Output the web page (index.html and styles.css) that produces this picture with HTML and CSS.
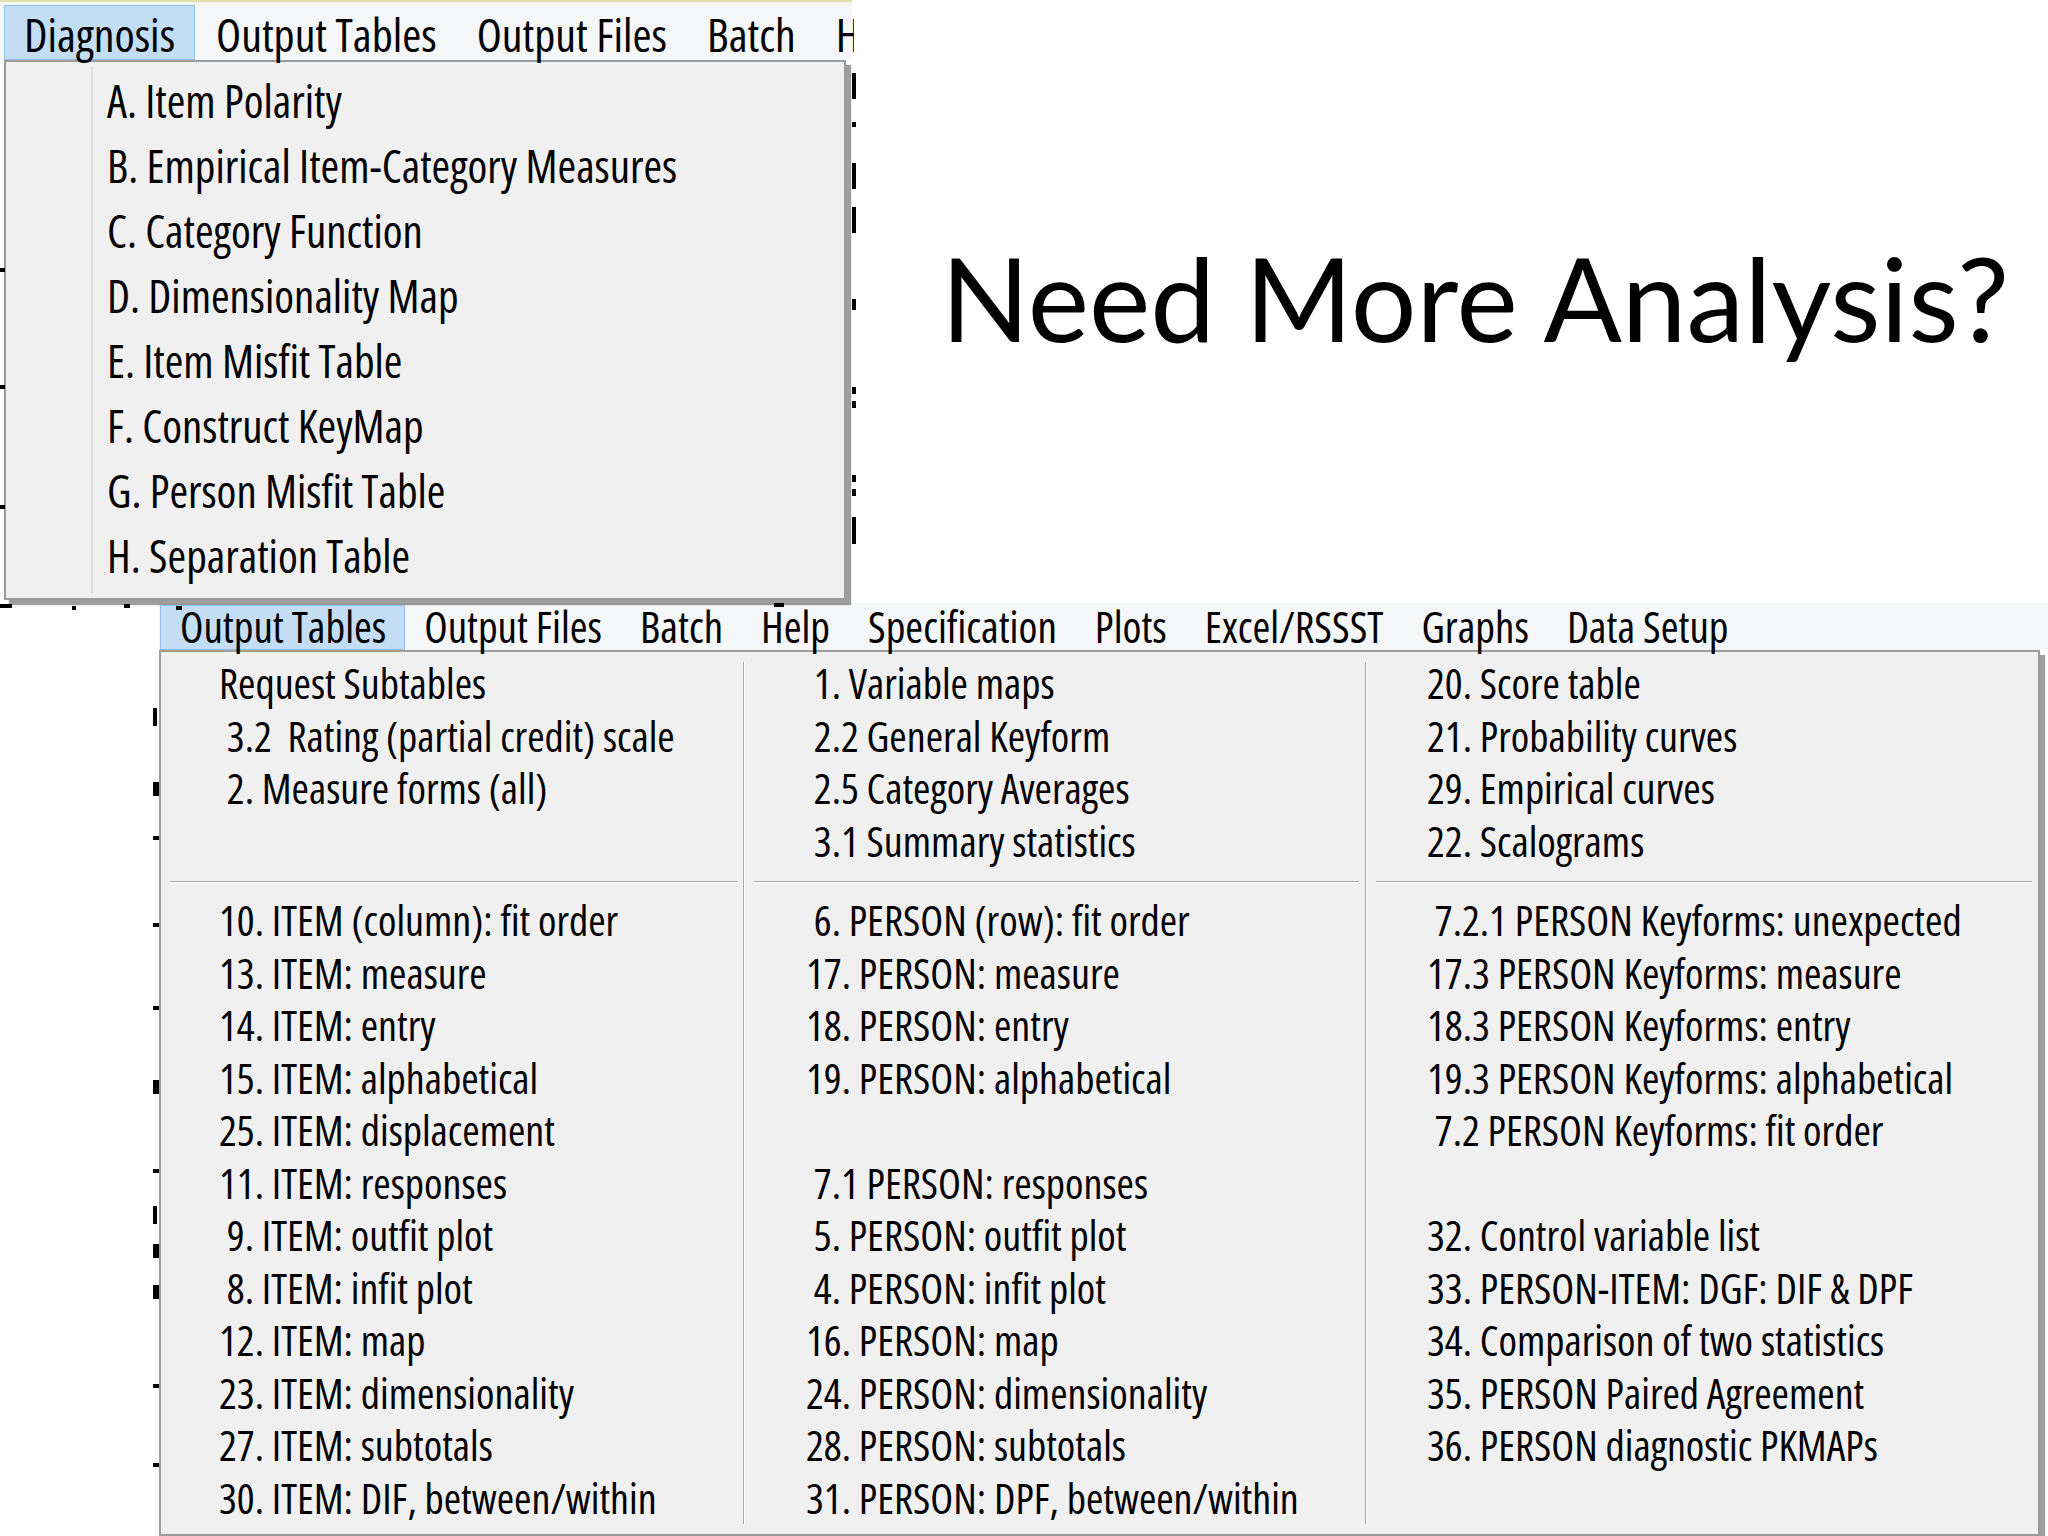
FILE: index.html
```html
<!DOCTYPE html>
<html lang="en">
<head>
    <meta charset="UTF-8">
    <meta name="viewport" content="width=device-width, initial-scale=1.0">
    <title>Need More Analysis?</title>
    <link rel="stylesheet" href="styles.css">
</head>
<body>
<div class="slide">

    <div class="upper">
        <!-- first screenshot: Diagnosis menu -->
        <div class="shotTop">
            <ul class="menubar topBar">
                <li class="menuItem active">Diagnosis</li>
                <li class="menuItem">Output Tables</li>
                <li class="menuItem">Output Files</li>
                <li class="menuItem">Batch</li>
                <li class="menuItem lastItem">Help</li>
            </ul>
            <div class="diagDrop">
                <div class="gutter"></div>
                <ul class="diagList">
                    <li>A. Item Polarity</li>
                    <li>B. Empirical Item-Category Measures</li>
                    <li>C. Category Function</li>
                    <li>D. Dimensionality Map</li>
                    <li>E. Item Misfit Table</li>
                    <li>F. Construct KeyMap</li>
                    <li>G. Person Misfit Table</li>
                    <li>H. Separation Table</li>
                </ul>
            </div>
        </div>
        <h1 class="title">Need More Analysis?</h1>
    </div>

    <!-- second screenshot: Output Tables menu -->
    <div class="shotBottom">
        <ul class="menubar lowBar">
            <li class="menuItem active">Output Tables</li>
            <li class="menuItem">Output Files</li>
            <li class="menuItem">Batch</li>
            <li class="menuItem">Help</li>
            <li class="menuItem">Specification</li>
            <li class="menuItem">Plots</li>
            <li class="menuItem">Excel/RSSST</li>
            <li class="menuItem">Graphs</li>
            <li class="menuItem">Data Setup</li>
        </ul>
        <div class="panel">
            <ul class="col col1">
                <li>Request Subtables</li>
                <li> 3.2  Rating (partial credit) scale</li>
                <li> 2. Measure forms (all)</li>
                <li></li>
                <li class="sep"></li>
                <li>10. ITEM (column): fit order</li>
                <li>13. ITEM: measure</li>
                <li>14. ITEM: entry</li>
                <li>15. ITEM: alphabetical</li>
                <li>25. ITEM: displacement</li>
                <li>11. ITEM: responses</li>
                <li> 9. ITEM: outfit plot</li>
                <li> 8. ITEM: infit plot</li>
                <li>12. ITEM: map</li>
                <li>23. ITEM: dimensionality</li>
                <li>27. ITEM: subtotals</li>
                <li>30. ITEM: DIF, between/within</li>
            </ul>
            <div class="vsep"></div>
            <ul class="col col2">
                <li> 1. Variable maps</li>
                <li> 2.2 General Keyform</li>
                <li> 2.5 Category Averages</li>
                <li> 3.1 Summary statistics</li>
                <li class="sep"></li>
                <li> 6. PERSON (row): fit order</li>
                <li>17. PERSON: measure</li>
                <li>18. PERSON: entry</li>
                <li>19. PERSON: alphabetical</li>
                <li></li>
                <li> 7.1 PERSON: responses</li>
                <li> 5. PERSON: outfit plot</li>
                <li> 4. PERSON: infit plot</li>
                <li>16. PERSON: map</li>
                <li>24. PERSON: dimensionality</li>
                <li>28. PERSON: subtotals</li>
                <li>31. PERSON: DPF, between/within</li>
            </ul>
            <div class="vsep"></div>
            <ul class="col col3">
                <li>20. Score table</li>
                <li>21. Probability curves</li>
                <li>29. Empirical curves</li>
                <li>22. Scalograms</li>
                <li class="sep"></li>
                <li> 7.2.1 PERSON Keyforms: unexpected</li>
                <li>17.3 PERSON Keyforms: measure</li>
                <li>18.3 PERSON Keyforms: entry</li>
                <li>19.3 PERSON Keyforms: alphabetical</li>
                <li> 7.2 PERSON Keyforms: fit order</li>
                <li></li>
                <li>32. Control variable list</li>
                <li>33. PERSON-ITEM: DGF: DIF &amp; DPF</li>
                <li>34. Comparison of two statistics</li>
                <li>35. PERSON Paired Agreement</li>
                <li>36. PERSON diagnostic PKMAPs</li>
            </ul>
        </div>
    </div>

    <!-- bits of the document window behind the menus -->
    <i class="mark bar" style="left:852px;top:73px;height:26px"></i>
    <i class="mark bar" style="left:852px;top:122px;height:5px"></i>
    <i class="mark bar" style="left:852px;top:163px;height:26px"></i>
    <i class="mark bar" style="left:852px;top:207px;height:26px"></i>
    <i class="mark bar" style="left:852px;top:299px;height:11px"></i>
    <i class="mark bar" style="left:852px;top:387px;height:7px"></i>
    <i class="mark bar" style="left:852px;top:401px;height:7px"></i>
    <i class="mark bar" style="left:852px;top:475px;height:7px"></i>
    <i class="mark bar" style="left:852px;top:489px;height:7px"></i>
    <i class="mark bar" style="left:852px;top:517px;height:27px"></i>
    <i class="mark dash" style="left:0px;top:604px;width:12px"></i>
    <i class="mark dash" style="left:72px;top:606px;width:4px"></i>
    <i class="mark dash" style="left:124px;top:604px;width:6px"></i>
    <i class="mark dash" style="left:176px;top:606px;width:6px"></i>
    <i class="mark dash" style="left:774px;top:603px;width:10px"></i>
    <i class="mark dash" style="left:0px;top:268px;width:5px"></i>
    <i class="mark dash" style="left:0px;top:385px;width:5px"></i>
    <i class="mark dash" style="left:0px;top:505px;width:5px"></i>
    <i class="mark bar" style="left:153px;top:708px;height:18px"></i>
    <i class="mark bar" style="left:153px;top:782px;height:14px;width:6px"></i>
    <i class="mark dash" style="left:153px;top:836px;width:6px"></i>
    <i class="mark dash" style="left:153px;top:923px;width:6px"></i>
    <i class="mark dash" style="left:153px;top:1006px;width:6px"></i>
    <i class="mark bar" style="left:153px;top:1080px;height:14px;width:6px"></i>
    <i class="mark dash" style="left:153px;top:1169px;width:6px"></i>
    <i class="mark bar" style="left:153px;top:1206px;height:18px"></i>
    <i class="mark bar" style="left:153px;top:1244px;height:14px;width:6px"></i>
    <i class="mark bar" style="left:153px;top:1285px;height:14px;width:6px"></i>
    <i class="mark dash" style="left:153px;top:1384px;width:6px"></i>
    <i class="mark dash" style="left:153px;top:1463px;width:6px"></i>
</div>
</body>
</html>
```
FILE: styles.css
```css
*{
    padding: 0;
    margin: 0;
    box-sizing: border-box;
}
ul{
    list-style: none;
}
body{
    background: #fff;
    color: #000;
    font-family: "Open Sans", "Noto Sans", sans-serif;
    font-stretch: 75%;
    font-weight: 380;
}
.slide{
    width: 2048px;
    height: 1536px;
    position: relative;
    overflow: hidden;
}

/* top half */
.upper{
    display: flex;
    height: 603px;
}
.shotTop{
    width: 852px;
    flex: none;
}
.menubar{
    display: flex;
    background: #f5f6f7;
}
.menuItem{
    flex: none;
    border: 1px solid transparent;
    white-space: nowrap;
}
.menuItem.active{
    background: #c3ddf5;
    border-color: #92c0ea;
}
.topBar{
    height: 60px;
    padding: 3px 0 0 4px;
    border-top: 2px solid #e3e0a9;
    font-size: 46px;
}
.topBar .menuItem{
    height: 55px;
    line-height: 56px;
    padding: 0 19px;
}
.topBar .menuItem + .menuItem{
    padding: 0 18px 0 20px;
}
/* the screenshot is cropped through "Help" */
.topBar .lastItem{
    flex: 1;
    min-width: 0;
    overflow: hidden;
    padding-right: 0;
    border-right: 0;
}
.diagDrop{
    display: flex;
    width: 842px;
    height: 540px;
    margin-left: 4px;
    background: #f0f0f0;
    border: 2px solid #9b9b9b;
    box-shadow: 5px 5px 1px rgba(0, 0, 0, 0.38);
}
.gutter{
    width: 85px;
    flex: none;
}
.diagList{
    flex: 1;
    margin: 5px 0;
    padding: 2px 0 0 14px;
    border-left: 2px solid #dcdcdc;
    font-size: 45px;
}
.diagList li{
    height: 65px;
    line-height: 63px;
    white-space: pre;
}
.title{
    margin: 240px 0 0 89px;
    font-family: Lato, "Open Sans", sans-serif;
    font-stretch: normal;
    font-weight: normal;
    font-size: 116px;
    line-height: 1;
    white-space: nowrap;
}

/* bottom half */
.shotBottom{
    margin-left: 159px;
}
.lowBar{
    height: 47px;
    padding: 2px 0 0 1px;
    font-size: 43px;
}
.lowBar .menuItem{
    height: 45px;
    line-height: 42px;
    padding: 0 18px;
}
.lowBar .menuItem.active{
    padding: 0 18px 0 19px;
}
.panel{
    display: grid;
    grid-template-columns: 582px 2px 620px 2px 1fr;
    width: 1881px;
    height: 886px;
    background: #f0f0f0;
    border: 2px solid #9d9d9d;
    box-shadow: 5px 5px 1px rgba(0, 0, 0, 0.38);
    font-size: 42px;
}
.col{
    padding-top: 6px;
}
.col li{
    height: 52.5px;
    line-height: 50px;
    white-space: pre;
}
.col1 li{
    padding-left: 58px;
}
.col2 li{
    padding-left: 61px;
}
.col3 li{
    padding-left: 60px;
}
.col li.sep{
    height: 2px;
    margin: 13px 6px 12px 9px;
    padding: 0;
    background: #a9a9a9;
    border-bottom: 1px solid #fff;
}
.vsep{
    margin: 10px 0;
    background: #a9a9a9;
    border-right: 1px solid #fff;
}

/* bits of the window behind */
.mark{
    position: absolute;
    background: #000;
}
.mark.bar{
    width: 4px;
}
.mark.dash{
    height: 4px;
}
```
